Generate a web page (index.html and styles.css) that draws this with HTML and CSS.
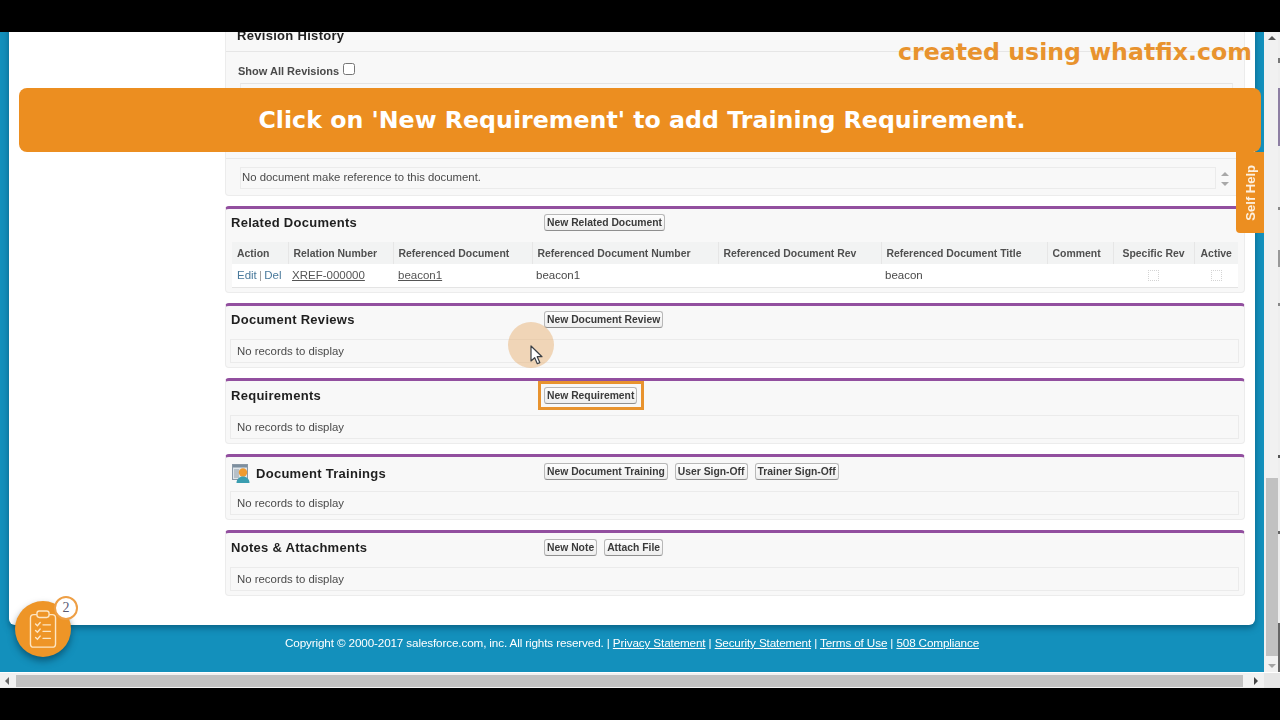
FILE: index.html
```html
<!DOCTYPE html>
<html lang="en">
<head>
<meta charset="utf-8">
<title>Document detail</title>
<link rel="stylesheet" href="styles.css">
</head>
<body>
<div class="screen">
  <div class="main">
    <div class="canvas">
      <div class="card">
        <section class="block block-rev">
          <h3 class="rev-title">Revision History</h3>
          <div class="show-row"><label class="show-label">Show All Revisions</label><input class="show-check" type="checkbox"></div>
          <div class="rev-box"></div>
          <div class="ref-row">
            <div class="ref-box">No document make reference to this document.</div>
            <div class="spin"><span class="spin-up"></span><span class="spin-down"></span></div>
          </div>
        </section>

        <section class="block block-related">
          <header class="block-head">
            <h3 class="block-title">Related Documents</h3>
            <div class="btns"><button class="btn">New Related Document</button></div>
          </header>
          <table class="rel-table">
            <thead>
              <tr>
                <th class="c-action">Action</th>
                <th class="c-rel">Relation Number</th>
                <th class="c-doc">Referenced Document</th>
                <th class="c-num">Referenced Document Number</th>
                <th class="c-rev">Referenced Document Rev</th>
                <th class="c-title">Referenced Document Title</th>
                <th class="c-com">Comment</th>
                <th class="c-spec center">Specific Rev</th>
                <th class="c-act center">Active</th>
              </tr>
            </thead>
            <tbody>
              <tr>
                <td class="act-links"><a class="act">Edit</a> <span class="sep">|</span> <a class="act">Del</a></td>
                <td class="cell-left"><a class="rec">XREF-000000</a></td>
                <td class="cell-doc"><a class="rec">beacon1</a></td>
                <td>beacon1</td>
                <td></td>
                <td>beacon</td>
                <td></td>
                <td class="center"><span class="ck"></span></td>
                <td class="center"><span class="ck"></span></td>
              </tr>
            </tbody>
          </table>
        </section>

        <section class="block block-tight">
          <header class="block-head">
            <h3 class="block-title">Document Reviews</h3>
            <div class="btns"><button class="btn">New Document Review</button></div>
          </header>
          <div class="empty">No records to display</div>
        </section>

        <section class="block">
          <header class="block-head">
            <h3 class="block-title">Requirements</h3>
            <div class="btns"><button class="btn">New Requirement</button></div>
          </header>
          <div class="empty">No records to display</div>
        </section>

        <section class="block">
          <header class="block-head">
            <h3 class="block-title with-icon">
              <svg class="train-icon" width="19" height="20" viewBox="0 0 19 20" aria-hidden="true">
                <rect x="0.5" y="0.5" width="15" height="15" fill="#dfe5ea" stroke="#8a98a6"/>
                <rect x="1" y="1" width="14" height="2.5" fill="#7d8f9f"/>
                <path d="M2 5h5v9H2z" fill="#b6c0c8"/>
                <circle cx="11" cy="8.5" r="4.2" fill="#ef9a2e"/>
                <path d="M4.5 19c0-4 3-6.5 6.5-6.5s6.5 2.500 6.500 6.500z" fill="#3a9db0"/>
              </svg>
              Document Trainings
            </h3>
            <div class="btns">
              <button class="btn">New Document Training</button>
              <button class="btn">User Sign-Off</button>
              <button class="btn">Trainer Sign-Off</button>
            </div>
          </header>
          <div class="empty">No records to display</div>
        </section>

        <section class="block">
          <header class="block-head">
            <h3 class="block-title">Notes &amp; Attachments</h3>
            <div class="btns">
              <button class="btn">New Note</button>
              <button class="btn">Attach File</button>
            </div>
          </header>
          <div class="empty">No records to display</div>
        </section>
      </div>
      <footer class="foot">Copyright © 2000-2017 salesforce.com, inc. All rights reserved. | <a>Privacy Statement</a> | <a>Security Statement</a> | <a>Terms of Use</a> | <a>508 Compliance</a></footer>
    </div>
    <div class="vscroll">
      <span class="arrow-up"></span>
      <span class="v-track"><span class="v-thumb"></span></span>
      <span class="arrow-down"></span>
    </div>
    <div class="strip"></div>
  </div>
  <div class="hscroll">
    <span class="arrow-left"></span>
    <span class="h-thumb"></span>
    <span class="arrow-right"></span>
    <span class="corner"></span>
  </div>

  <div class="watermark">created using whatfix.com</div>
  <div class="banner">Click on 'New Requirement' to add Training Requirement.</div>
  <div class="selfhelp"><span class="selfhelp-text">Self Help</span></div>
  <div class="halo"></div>
  <svg class="cursor" width="14" height="20" viewBox="0 0 14 20" aria-hidden="true">
    <path d="M1 1v15l3.700-3.300 2.600 6 2.500-1.100-2.600-5.900H12z" fill="#fff" stroke="#3a3f45" stroke-width="1.200" stroke-linejoin="round"/>
  </svg>
  <div class="focus-ring"></div>
  <div class="tasks">
    <svg width="28" height="39" viewBox="0 0 30 42" fill="none" stroke="#fde6c4" stroke-width="1.500" aria-hidden="true">
      <rect x="1.500" y="5" width="27" height="35" rx="3.500"/>
      <rect x="8.500" y="1" width="13" height="7" rx="2.500" fill="#ee9527"/>
      <path d="M7 15l2 2 3-3.500M7 22l2 2 3-3.500M7 29.500l2 2 3-3.500M15 16h8M15 23h8M15 30.500h8" stroke-linecap="round"/>
    </svg>
  </div>
  <div class="tasks-badge">2</div>
</div>
</body>
</html>
```

FILE: styles.css
```css
* { box-sizing: border-box; }
html, body { margin: 0; height: 100%; background: #000; overflow: hidden; }
body { font-family: "Liberation Sans", Arial, sans-serif; }

.screen {
  position: relative;
  width: 1280px;
  height: 720px;
  padding: 32px 0;
  display: flex;
  flex-direction: column;
  background: #000;
}
.main { flex: 1; min-height: 0; display: flex; filter: blur(0.4px); }

/* page canvas */
.canvas {
  flex: 1;
  min-width: 0;
  overflow: hidden;
  background: #1390bc;
  padding: 0 9px;
}
.card {
  height: 603px;
  margin-top: -10px;
  padding: 0 10px 0 216px;
  background: #fff;
  border-radius: 0 0 6px 6px;
  box-shadow: 0 3px 6px rgba(0, 60, 90, .55);
}
.foot {
  margin-top: 10px;
  height: 16px;
  line-height: 16px;
  text-align: center;
  color: #fff;
  font-size: 11.700px;
  letter-spacing: -0.13px;
}
.foot a { text-decoration: underline; }

/* sections */
.block {
  height: 66px;
  margin-bottom: 10px;
  background: #f8f8f8;
  border: 1px solid #ececec;
  border-top: 3px solid #924f9f;
  border-radius: 4px;
}
.block-related { height: 87px; }
.block-tight { height: 65px; }
.block-head {
  height: 34px;
  padding: 6px 5px 0 4px;
  display: flex;
  align-items: flex-start;
}
.block-tight .block-head, .block-related .block-head { height: 33px; padding-top: 5px; }
.block-title, .rev-title {
  margin: 0;
  font-size: 13px;
  font-weight: bold;
  color: #1f1f1f;
  letter-spacing: 0.28px;
}
.block-title { width: 314px; flex: none; padding-left: 1px; line-height: 17px; }
.with-icon { display: flex; align-items: center; gap: 5px; padding-left: 2px; }
.train-icon { flex: none; margin-top: 1px; }
.btns { display: flex; gap: 7px; }
.btn {
  height: 17px;
  padding: 0 2px;
  font: bold 10.350px "Liberation Sans", Arial, sans-serif;
  color: #3b3b3b;
  background: linear-gradient(#fdfdfd, #eeeeee);
  border: 1px solid #b8b8b8;
  border-bottom-color: #8f8f8f;
  border-radius: 3px;
}
.empty {
  height: 24px;
  margin: 0 5px 0 4px;
  padding-left: 6px;
  line-height: 23px;
  font-size: 11.400px;
  color: #4a4a4a;
  background: #f8f8f8;
  border: 1px solid #ebebeb;
}

/* first (scrolled) section */
.block-rev {
  height: 174px;
  border-top: 0;
  border-radius: 0 0 4px 4px;
}
.rev-title {
  height: 30px;
  padding: 5px 11px 0;
  border-bottom: 1px solid #e6e6e6;
  line-height: 18px;
  letter-spacing: 0.3px;
}
.show-row {
  height: 31px;
  padding: 10px 0 0 12px;
  display: flex;
  align-items: flex-start;
  gap: 4px;
}
.show-label { font-size: 11px; font-weight: bold; color: #4a4a4a; line-height: 19px; }
.show-check { width: 12px; height: 12px; margin: 1px 0 0; }
.rev-box {
  height: 60px;
  margin: 0 11px 15px 14px;
  border: 1px solid #ebebeb;
  border-bottom: 0;
  border-top-color: #e4e4e4;
}
.ref-row {
  padding: 8px 11px 0 14px;
  border-top: 1px solid #e8e8e8;
  display: flex;
}
.ref-box {
  flex: 1;
  height: 22px;
  padding-left: 1px;
  line-height: 19px;
  font-size: 11.350px;
  color: #4a4a4a;
  border: 1px solid #ebebeb;
}
.spin { width: 17px; display: flex; flex-direction: column; align-items: center; gap: 6px; padding-top: 5px; }
.spin-up, .spin-down { width: 0; height: 0; border-left: 4px solid transparent; border-right: 4px solid transparent; }
.spin-up { border-bottom: 4px solid #a8a8a8; }
.spin-down { border-top: 4px solid #a8a8a8; }

/* related table */
.rel-table {
  width: 1006px;
  margin-left: 6px;
  table-layout: fixed;
  border-collapse: collapse;
  font-size: 11.500px;
  color: #4a4a4a;
}
.rel-table th {
  height: 22px;
  padding: 0 0 0 5px;
  text-align: left;
  font-size: 10.450px;
  font-weight: bold;
  color: #4f4f4f;
  background: #f2f3f3;
  border-left: 1px solid #e6e6e6;
  white-space: nowrap;
}
.rel-table th:first-child { border-left: 0; }
.rel-table td {
  height: 23px;
  padding: 0 0 0 4px;
  background: #fff;
  border-bottom: 1px solid #e4e4e4;
  white-space: nowrap;
}
.c-action { width: 56px; }
.c-rel { width: 105px; }
.c-doc { width: 139px; }
.c-num { width: 186px; }
.c-rev { width: 163px; }
.c-title { width: 166px; }
.c-com { width: 66px; }
.c-spec { width: 81px; }
.c-act { width: 44px; }
.rel-table .act-links { padding-left: 5px; }
.rel-table .cell-doc { padding-left: 5px; }
.act { color: #4a7a9c; }
.sep { color: #9a9a9a; margin: 0 -1px; }
.rec { color: #555; text-decoration: underline; }
.rel-table .center { padding: 0; text-align: center; }
.ck { display: inline-block; width: 11px; height: 11px; border: 1px dotted #d4d4d4; vertical-align: middle; }

/* scrollbars */
.vscroll {
  width: 14px;
  flex: none;
  background: #f1f1f1;
  display: flex;
  flex-direction: column;
  align-items: center;
  padding: 4px 0 4px 2px;
}
.v-track { flex: 1; width: 12px; padding-top: 432px; margin: 6px 0 3px; }
.v-thumb { display: block; height: 178px; background: #c1c1c1; }
.arrow-up, .arrow-down { width: 0; height: 0; border-left: 4px solid transparent; border-right: 4px solid transparent; }
.arrow-up { border-bottom: 4px solid #555; }
.arrow-down { border-top: 4px solid #a3a3a3; }
.strip {
  width: 2px;
  flex: none;
  background: linear-gradient(#eee 0 26px, #777 26px 31px, #eee 31px 56px, #8d7fa3 56px 114px, #eee 114px 175px, #888 175px 178px, #eee 178px 218px, #999 218px 235px, #eee 235px 271px, #888 271px 274px, #eee 274px 423px, #555 423px 426px, #eee 426px 499px, #666 499px 502px, #eee 502px 591px, #666 591px 640px);
}
.hscroll {
  height: 16px;
  flex: none;
  display: flex;
  align-items: center;
  background: #f1f1f1;
  border-top: 1px solid #fff;
  filter: blur(0.4px);
}
.arrow-left { width: 0; height: 0; margin-left: 5px; border-top: 4px solid transparent; border-bottom: 4px solid transparent; border-right: 4px solid #666; }
.h-thumb { width: 1227px; height: 12px; margin-left: 7px; background: #c1c1c1; }
.arrow-right { width: 0; height: 0; margin-left: 11px; border-top: 4px solid transparent; border-bottom: 4px solid transparent; border-left: 4px solid #444; }
.corner { width: 16px; height: 15px; margin-left: 6px; background: #e6e6e6; }

/* overlays */
.watermark {
  position: absolute;
  left: 898px;
  top: 37px;
  font: bold 23.660px/30px "DejaVu Sans", sans-serif;
  color: #e8932e;
  white-space: nowrap;
}
.banner {
  position: absolute;
  left: 19px;
  top: 88px;
  width: 1242px;
  height: 64px;
  padding-left: 4px;
  border-radius: 8px;
  background: #ec8e20;
  color: #fff;
  font: bold 23.700px/64px "DejaVu Sans", sans-serif;
  text-align: center;
}
.selfhelp {
  position: absolute;
  left: 1236px;
  top: 152px;
  width: 28px;
  height: 81px;
  display: flex;
  align-items: center;
  justify-content: center;
  border-radius: 0 0 0 4px;
  background: #ec8e20;
}
.selfhelp-text {
  writing-mode: vertical-rl;
  transform: rotate(180deg);
  color: #fdf0df;
  font-size: 13px;
  font-weight: bold;
}
.halo {
  position: absolute;
  left: 508px;
  top: 322px;
  width: 46px;
  height: 46px;
  border-radius: 50%;
  background: rgba(232, 178, 118, .5);
}
.cursor { position: absolute; left: 530px; top: 345px; }
.focus-ring {
  position: absolute;
  left: 538px;
  top: 381px;
  width: 106px;
  height: 29px;
  border: 3px solid #e8932e;
}
.tasks {
  position: absolute;
  left: 15px;
  top: 601px;
  width: 56px;
  height: 56px;
  border-radius: 50%;
  background: #ee9527;
  box-shadow: 0 4px 7px rgba(0, 40, 60, .5);
  display: flex;
  align-items: center;
  justify-content: center;
}
.tasks-badge {
  position: absolute;
  left: 54px;
  top: 596px;
  width: 24px;
  height: 24px;
  border-radius: 50%;
  border: 2px solid #ee9f45;
  background: #fff;
  color: #5a5a72;
  font: 14px/20px "Liberation Serif", serif;
  text-align: center;
}
```
